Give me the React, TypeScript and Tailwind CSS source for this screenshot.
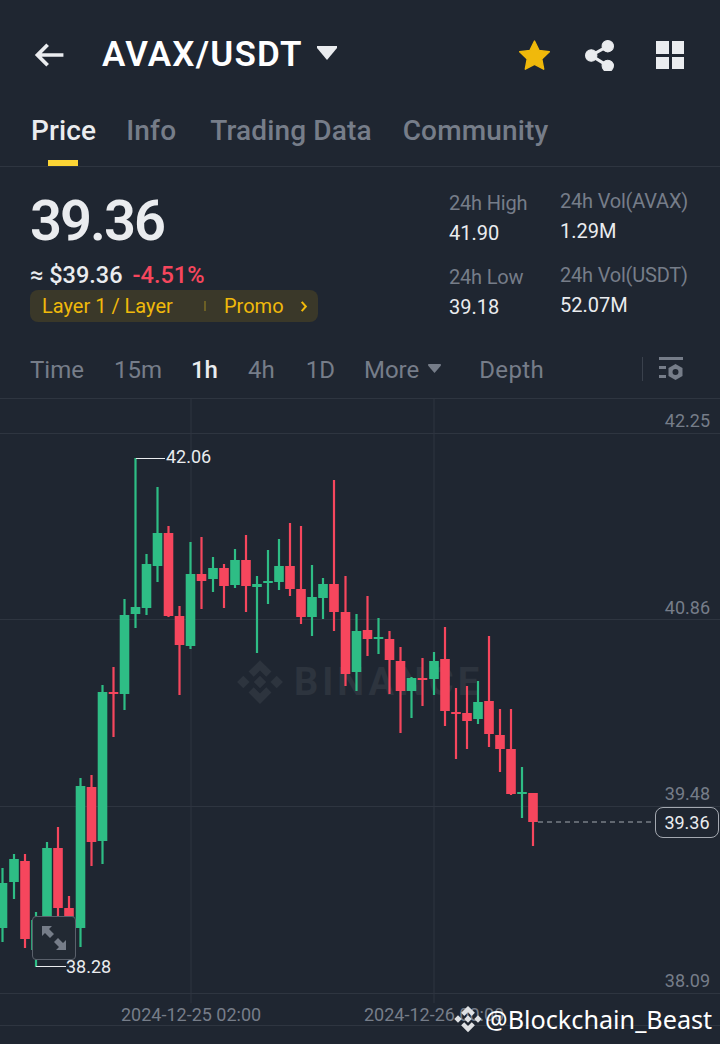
const GREEN = "#2ebd85";
const RED = "#f6465d";

// x, wick top, wick bottom, body top, body bottom, up
const candles: [number, number, number, number, number, boolean][] = [
  [2.5, 868, 942, 883, 928, true],
  [14, 854, 899, 859, 882, true],
  [25, 854, 948, 861, 939, false],
  [36, 912, 967, 920, 950, true],
  [47, 842, 925, 848, 925, true],
  [58, 827, 925, 848, 908, false],
  [69, 896, 930, 908, 930, false],
  [80.5, 778, 947, 786, 928, true],
  [91.5, 775, 866, 787, 842, false],
  [102.5, 685, 864, 692, 841, true],
  [113.5, 667, 737, 692, 694, false],
  [124.5, 599, 710, 615, 694, true],
  [135.5, 458, 628, 607, 614, true],
  [146.5, 554, 615, 564, 608, true],
  [157.5, 487, 582, 533, 566, true],
  [168.5, 526, 617, 533, 616, false],
  [179.5, 606, 695, 616, 645, false],
  [190.5, 542, 649, 574, 646, true],
  [201.5, 537, 609, 574, 581, false],
  [213, 557, 592, 568, 579, true],
  [224, 564, 608, 568, 586, false],
  [235, 549, 588, 560, 585, true],
  [246, 535, 612, 560, 586, false],
  [257, 576, 653, 584, 587, true],
  [268, 550, 604, 581, 583, true],
  [279, 539, 590, 566, 582, true],
  [290, 523, 596, 566, 589, false],
  [301, 526, 624, 589, 617, false],
  [312, 565, 636, 597, 617, true],
  [323, 578, 619, 584, 598, true],
  [334, 480, 631, 584, 612, false],
  [345.5, 576, 686, 612, 674, false],
  [356.5, 614, 691, 631, 672, true],
  [367.5, 596, 656, 630, 639, false],
  [378.5, 618, 654, 637, 639, true],
  [389.5, 631, 694, 639, 660, false],
  [400.5, 647, 733, 661, 691, false],
  [411.5, 677, 718, 678, 691, true],
  [422.5, 658, 706, 678, 680, false],
  [434, 652, 695, 661, 679, true],
  [445, 627, 726, 659, 711, false],
  [456, 688, 759, 712, 714, false],
  [467, 686, 749, 713, 721, false],
  [478, 681, 724, 702, 719, true],
  [489, 636, 747, 701, 734, false],
  [500, 709, 772, 735, 749, false],
  [511, 709, 795, 749, 794, false],
  [522, 767, 818, 792, 794, true],
  [533, 793, 846, 793, 822, false],
];

const CHART_TOP = 399;

function BinanceLogo({ className, color }: { className: string; color: string }) {
  return (
    <svg viewBox="0 0 48 48" className={className} fill={color}>
      <path d="M24 3 L35 14 L30 19 L24 13 L18 19 L13 14 Z" />
      <path d="M24 45 L13 34 L18 29 L24 35 L30 29 L35 34 Z" />
      <path d="M24 18 L30 24 L24 30 L18 24 Z" />
      <path d="M8 18 L14 24 L8 30 L2 24 Z" />
      <path d="M40 18 L46 24 L40 30 L34 24 Z" />
    </svg>
  );
}

function Stat({ label, value, className }: { label: string; value: string; className?: string }) {
  return (
    <div className={className}>
      <div className="text-[20px] leading-[28px] tracking-[-0.2px] text-[#767d89]">{label}</div>
      <div className="mt-[2px] text-[20px] leading-[28px] text-[#eaecef]">{value}</div>
    </div>
  );
}

function Chart() {
  const lineColor = "#2e3540";
  return (
    <div className="relative h-[645px] overflow-hidden">
      {/* watermark */}
      <div className="absolute left-[235px] top-[258px] flex items-center gap-[9px]">
        <BinanceLogo className="h-[50px] w-[50px]" color="#2d343e" />
        <span className="text-[38px] font-bold leading-[48px] tracking-[4px] text-[#2d343e]">BINANCE</span>
      </div>

      <svg width="720" height="645" viewBox={`0 ${CHART_TOP} 720 645`} className="absolute left-0 top-0">
        {[433, 619, 806, 993, 1025].map((y) => (
          <line key={y} x1="0" x2="720" y1={y + 0.5} y2={y + 0.5} stroke={lineColor} strokeWidth="1" />
        ))}
        <line x1="191" x2="191" y1={CHART_TOP} y2="1003" stroke={lineColor} />
        <line x1="434" x2="434" y1={CHART_TOP} y2="1003" stroke={lineColor} />
        {candles.map(([x, wt, wb, bt, bb, up], i) => (
          <g key={i} fill={up ? GREEN : RED}>
            <rect x={x - 1.1} y={wt} width="2.2" height={wb - wt} />
            <rect x={x - 4.8} y={bt} width="9.6" height={bb - bt} />
          </g>
        ))}
        <path d="M136 458.5 H165 M36 966.5 H66" stroke="#eaecef" strokeWidth="1" />
        <line x1="538" x2="655" y1="822" y2="822" stroke="#a3a8b0" strokeWidth="1" strokeDasharray="5 4" />
      </svg>

      <span className="absolute left-[166px] top-[46px] text-[18px] leading-[24px] text-[#eaecef]">42.06</span>
      <span className="absolute left-[66px] top-[556px] text-[18px] leading-[24px] text-[#eaecef]">38.28</span>

      {[
        ["42.25", 10],
        ["40.86", 197],
        ["39.48", 383],
        ["38.09", 570],
      ].map(([v, t]) => (
        <span
          key={v}
          className="absolute right-[10px] text-[18px] leading-[24px] text-[#767d89]"
          style={{ top: t as number }}
        >
          {v}
        </span>
      ))}

      <div className="absolute left-[655px] top-[408px] flex h-[31px] w-[64px] items-center justify-center rounded-[8px] border border-[#a3a8b0] bg-[#1f2631] text-[18px] text-[#eaecef]">
        39.36
      </div>

      {/* expand button */}
      <div className="absolute left-[32px] top-[517px] flex h-[44px] w-[44px] items-center justify-center rounded-[4px] border border-[#5a606b] bg-[#222933]">
        <svg viewBox="0 0 26 26" className="h-[26px] w-[26px]" fill="#767d89">
          <path d="M1 1 H11 L8 4 L13 9 L9 13 L4 8 L1 11 Z" />
          <path d="M25 25 H15 L18 22 L13 17 L17 13 L22 18 L25 15 Z" />
        </svg>
      </div>

      <span className="absolute left-[121px] top-[604px] text-[18px] leading-[24px] text-[#767d89]">2024-12-25 02:00</span>
      <span className="absolute left-[364px] top-[604px] text-[18px] leading-[24px] text-[#767d89]">2024-12-26 00:00</span>

      {/* reposter tag */}
      <div className="absolute left-[453px] top-[605px] flex items-center gap-[2px]">
        <BinanceLogo className="h-[30px] w-[30px]" color="#dfe1e4" />
        <span className="font-['Noto_Sans'] text-[25.2px] leading-[30px] text-white">@Blockchain_Beast</span>
      </div>
    </div>
  );
}

export default function App() {
  return (
    <div className="h-[1044px] w-[720px] overflow-hidden bg-[#1f2631] font-['Roboto',sans-serif]">
      {/* top bar */}
      <div className="flex h-[110px] items-center pl-[34px] pr-[36px]">
        <svg viewBox="0 0 32 28" className="h-[26px] w-[31px]" fill="none" stroke="#eaecef" strokeWidth="4">
          <path d="M31 14 H3 M14 3 L3 14 L14 25" />
        </svg>
        <span className="ml-[37px] text-[35px] font-semibold tracking-[1.2px] text-white">AVAX/USDT</span>
        <svg viewBox="0 0 14 14" className="ml-[14px] mb-[4px] h-[14px] w-[20px]" fill="#eaecef" preserveAspectRatio="none">
          <path d="M0 0 H14 V2 L7 14 L0 2 Z" />
        </svg>
        <svg viewBox="0 0 24 24" className="ml-auto h-[33px] w-[33px]" fill="#f0b90b">
          <path d="M12 1.5 L15.3 8.3 L22.8 9.3 L17.3 14.5 L18.7 22 L12 18.4 L5.3 22 L6.7 14.5 L1.2 9.3 L8.7 8.3 Z" stroke="#f0b90b" strokeLinejoin="round" />
        </svg>
        <svg viewBox="0 0 30 30" className="ml-[33px] h-[31px] w-[31px]" fill="#eaecef" stroke="#eaecef">
          <circle cx="23" cy="6" r="5.5" />
          <circle cx="7" cy="15" r="5.5" />
          <circle cx="23" cy="25" r="5.5" />
          <path d="M23 6 L7 15 L23 25" fill="none" strokeWidth="3" />
        </svg>
        <div className="ml-[41px] grid h-[28px] w-[28px] grid-cols-2 gap-[3px]">
          <div className="bg-[#eaecef]" />
          <div className="bg-[#eaecef]" />
          <div className="bg-[#eaecef]" />
          <div className="bg-[#eaecef]" />
        </div>
      </div>

      {/* tabs */}
      <div className="flex h-[57px] border-b border-[#2e3540] pl-[31px] pt-px text-[28px] font-medium leading-[40px] tracking-[0.15px] text-[#767d89]">
        <div className="relative h-full text-[#eaecef]">
          Price
          <div className="absolute bottom-0 left-[17px] h-[6px] w-[30px] bg-[#fcd535]" />
        </div>
        <span className="ml-[30px]">Info</span>
        <span className="ml-[34px]">Trading Data</span>
        <span className="ml-[31px]">Community</span>
      </div>

      {/* price block */}
      <div className="flex h-[175px] pl-[30px]">
        <div className="w-[419px]">
          <div className="mt-[23px] text-[56px] font-semibold leading-[62px] tracking-[-2px] text-[#eaecef]">39.36</div>
          <div className="mt-[10px] flex text-[23.5px] font-medium leading-[26px] text-[#eaecef]">
            <span>≈ $39.36</span>
            <span className="ml-[10px] text-[#f6465d]">-4.51%</span>
          </div>
          <div className="mt-[2px] flex h-[32px] w-[288px] items-center rounded-[8px] bg-[#3a3829] pl-[12px] text-[20px] text-[#f0b90b]">
            <span className="w-[162px]">Layer 1 / Layer</span>
            <div className="h-[10px] w-[2px] bg-[#6b5f25]" />
            <span className="ml-[18px]">Promo</span>
            <svg viewBox="0 0 8 12" className="ml-[16px] h-[11px] w-[8px]" fill="none" stroke="#f0b90b" strokeWidth="2.2">
              <path d="M1.5 1 L6 6 L1.5 11" />
            </svg>
          </div>
        </div>
        <div className="w-[111px] pt-[22px]">
          <Stat label="24h High" value="41.90" />
          <Stat label="24h Low" value="39.18" className="mt-[16px]" />
        </div>
        <div className="pt-[20px]">
          <Stat label="24h Vol(AVAX)" value="1.29M" />
          <Stat label="24h Vol(USDT)" value="52.07M" className="mt-[16px]" />
        </div>
      </div>

      {/* intervals */}
      <div className="flex h-[56px] items-start pl-[30px] pt-[11px] text-[24px] leading-[34px] text-[#767d89]">
        <span>Time</span>
        <span className="ml-[30px]">15m</span>
        <span className="ml-[29px] font-medium text-[#eaecef]">1h</span>
        <span className="ml-[30px]">4h</span>
        <span className="ml-[31px]">1D</span>
        <span className="ml-[29px]">More</span>
        <svg viewBox="0 0 14 10" className="ml-[9px] mt-[11px] h-[9px] w-[13px]" fill="#767d89">
          <path d="M0 0 H14 V2 L7 10 L0 2 Z" />
        </svg>
        <span className="ml-[38px] tracking-[0.4px]">Depth</span>
        <div className="ml-[98px] mt-[4px] h-[24px] w-px bg-[#3a414c]" />
        <svg viewBox="0 0 24 24" className="ml-[16px] mt-[4px] h-[24px] w-[24px]" fill="#767d89">
          <rect x="0" y="0" width="24" height="3" />
          <rect x="0" y="9" width="7" height="3" />
          <rect x="0" y="18" width="7" height="3" />
          <path fillRule="evenodd" d="M16.5 7 L23.5 11 V19 L16.5 23 L9.5 19 V11 Z M16.5 12 A3 3 0 1 0 16.5 18 A3 3 0 1 0 16.5 12 Z" />
        </svg>
      </div>

      <div className="h-px bg-[#2e3540]" />
      <Chart />
    </div>
  );
}
